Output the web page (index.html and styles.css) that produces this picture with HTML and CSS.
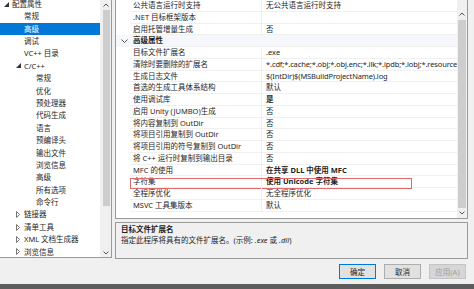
FILE: index.html
```html
<!DOCTYPE html>
<html lang="zh-CN">
<head>
    <meta charset="UTF-8">
    <title>属性页</title>
    <link rel="stylesheet" href="styles.css">
</head>
<body>
    <div class="main">
        <!-- left: settings tree -->
        <div class="tree-box">
            <ul class="tree">
                <li class="lv0"><span class="twisty"><svg width="5" height="5"><polygon points="5,0 5,5 0,5" fill="#333"/></svg></span>配置属性</li>
                <li class="lv1"><span class="twisty"></span>常规</li>
                <li class="lv1 sel"><span class="twisty"></span>高级</li>
                <li class="lv1"><span class="twisty"></span>调试</li>
                <li class="lv1"><span class="twisty"></span>VC++ 目录</li>
                <li class="lv1"><span class="twisty"><svg width="5" height="5"><polygon points="5,0 5,5 0,5" fill="#333"/></svg></span>C/C++</li>
                <li class="lv2"><span class="twisty"></span>常规</li>
                <li class="lv2"><span class="twisty"></span>优化</li>
                <li class="lv2"><span class="twisty"></span>预处理器</li>
                <li class="lv2"><span class="twisty"></span>代码生成</li>
                <li class="lv2"><span class="twisty"></span>语言</li>
                <li class="lv2"><span class="twisty"></span>预编译头</li>
                <li class="lv2"><span class="twisty"></span>输出文件</li>
                <li class="lv2"><span class="twisty"></span>浏览信息</li>
                <li class="lv2"><span class="twisty"></span>高级</li>
                <li class="lv2"><span class="twisty"></span>所有选项</li>
                <li class="lv2"><span class="twisty"></span>命令行</li>
                <li class="lv1"><span class="twisty"><svg width="4" height="7"><polygon points="0.5,0.5 3.5,3.5 0.5,6.5" fill="none" stroke="#777"/></svg></span>链接器</li>
                <li class="lv1"><span class="twisty"><svg width="4" height="7"><polygon points="0.5,0.5 3.5,3.5 0.5,6.5" fill="none" stroke="#777"/></svg></span>清单工具</li>
                <li class="lv1"><span class="twisty"><svg width="4" height="7"><polygon points="0.5,0.5 3.5,3.5 0.5,6.5" fill="none" stroke="#777"/></svg></span>XML 文档生成器</li>
                <li class="lv1"><span class="twisty"><svg width="4" height="7"><polygon points="0.5,0.5 3.5,3.5 0.5,6.5" fill="none" stroke="#777"/></svg></span>浏览信息</li>
            </ul>
            <div class="vscroll tree-scroll">
                <div class="arrow"><svg width="6" height="4"><polyline points="0.5,3.5 3,1 5.5,3.5" fill="none" stroke="#555"/></svg></div>
                <div class="thumb tree-thumb"></div>
                <div class="spacer"></div>
                <div class="arrow"><svg width="6" height="4"><polyline points="0.5,0.5 3,3 5.5,0.5" fill="none" stroke="#555"/></svg></div>
            </div>
        </div>

        <div class="right">
            <!-- property grid -->
            <div class="grid-box">
                <div class="rows">
                    <div class="row"><span class="gutter"></span><span class="name">公共语言运行时支持</span><span class="value">无公共语言运行时支持</span></div>
                    <div class="row"><span class="gutter"></span><span class="name">.NET 目标框架版本</span><span class="value"></span></div>
                    <div class="row"><span class="gutter"></span><span class="name">启用托管增量生成</span><span class="value">否</span></div>
                    <div class="row cat"><span class="gutter"><svg width="7" height="4"><polyline points="0.5,0.5 3.5,3.5 6.5,0.5" fill="none" stroke="#555"/></svg></span><span class="name">高级属性</span></div>
                    <div class="row"><span class="gutter"></span><span class="name">目标文件扩展名</span><span class="value">.exe</span></div>
                    <div class="row"><span class="gutter"></span><span class="name">清除时要删除的扩展名</span><span class="value tight">*.cdf;*.cache;*.obj;*.obj.enc;*.ilk;*.ipdb;*.iobj;*.resource</span></div>
                    <div class="row"><span class="gutter"></span><span class="name">生成日志文件</span><span class="value tight">$(IntDir)$(MSBuildProjectName).log</span></div>
                    <div class="row"><span class="gutter"></span><span class="name">首选的生成工具体系结构</span><span class="value">默认</span></div>
                    <div class="row"><span class="gutter"></span><span class="name">使用调试库</span><span class="value bold">是</span></div>
                    <div class="row"><span class="gutter"></span><span class="name">启用 Unity (JUMBO)生成</span><span class="value">否</span></div>
                    <div class="row"><span class="gutter"></span><span class="name">将内容复制到 OutDir</span><span class="value">否</span></div>
                    <div class="row"><span class="gutter"></span><span class="name">将项目引用复制到 OutDir</span><span class="value">否</span></div>
                    <div class="row"><span class="gutter"></span><span class="name">将项目引用的符号复制到 OutDir</span><span class="value">否</span></div>
                    <div class="row"><span class="gutter"></span><span class="name">将 C++ 运行时复制到输出目录</span><span class="value">否</span></div>
                    <div class="row"><span class="gutter"></span><span class="name">MFC 的使用</span><span class="value bold">在共享 DLL 中使用 MFC</span></div>
                    <div class="row marked"><span class="gutter"></span><span class="name">字符集</span><span class="value bold">使用 Unicode 字符集</span><span class="mark"></span></div>
                    <div class="row"><span class="gutter"></span><span class="name">全程序优化</span><span class="value">无全程序优化</span></div>
                    <div class="row"><span class="gutter"></span><span class="name">MSVC 工具集版本</span><span class="value">默认</span></div>
                </div>
                <div class="vscroll grid-scroll">
                    <div class="arrow"><svg width="6" height="4"><polyline points="0.5,3.5 3,1 5.5,3.5" fill="none" stroke="#555"/></svg></div>
                    <div class="thumb grid-thumb"></div>
                    <div class="spacer"></div>
                    <div class="arrow"><svg width="6" height="4"><polyline points="0.5,0.5 3,3 5.5,0.5" fill="none" stroke="#555"/></svg></div>
                </div>
            </div>

            <!-- description of the selected property -->
            <div class="desc">
                <div class="desc-title">目标文件扩展名</div>
                <div>指定此程序将具有的文件扩展名。(示例: <i>.exe</i> 或 <i>.dll</i>)</div>
            </div>
        </div>
    </div>

    <div class="buttons">
        <button class="btn default">确定</button>
        <button class="btn">取消</button>
        <button class="btn" disabled>应用(A)</button>
    </div>
    <div class="taskbar"></div>
</body>
</html>
```

FILE: styles.css
```css
:root {
    --dialog-bg: #f0f0f0;
    --panel-border: #9a9a9a;
    --line: #f0f0f0;
    --text: #1e1e1e;
    --select: #0078d7;
}

body {
    margin: 0;
    width: 474px;
    height: 289px;
    overflow: hidden;
    background-color: var(--dialog-bg);
    color: var(--text);
    font-family: "Noto Sans", "Noto Sans CJK SC", sans-serif;
    font-size: 7.5px;
}

.main {
    display: grid;
    grid-template-columns: 112px 353px;
    column-gap: 3px;
    height: 259px;
}

/* Tree */
.tree-box {
    display: flex;
    height: 258px;
    box-sizing: border-box;
    background-color: #fff;
    border-right: 1px solid var(--panel-border);
    border-bottom: 1px solid var(--panel-border);
}

.tree {
    list-style: none;
    margin: -2.2px 0 0;
    padding: 0;
    width: 100px;
    overflow: hidden;
}

.tree li {
    display: flex;
    align-items: center;
    height: 12.4px;
    line-height: 12.4px;
    white-space: nowrap;
}

.tree .lv0 { padding-left: 4px; }
.tree .lv1 { padding-left: 16px; }
.tree .lv2 { padding-left: 28px; }

.tree .sel {
    background-color: var(--select);
    color: #fff;
}

.twisty {
    display: flex;
    align-items: center;
    width: 8px;
    flex-shrink: 0;
}

/* Scrollbars */
.vscroll {
    display: flex;
    flex-direction: column;
    align-items: center;
    background-color: #f0f0f0;
}

.vscroll .arrow {
    display: flex;
    align-items: center;
    justify-content: center;
    height: 9px;
    width: 100%;
}

.vscroll .spacer {
    flex: 1;
}

.thumb {
    background-color: #cdcdcd;
}

.tree-scroll {
    width: 11px;
}

.tree-thumb {
    width: 7px;
    height: 196px;
    margin: 1px 0 0 2px;
}

.grid-scroll {
    width: 10px;
    padding-top: 9px;
    box-sizing: border-box;
}

.grid-scroll .arrow {
    height: 10px;
}

.grid-thumb {
    width: 8px;
    height: 188px;
    margin-top: 1px;
}

/* Property grid */
.right {
    display: flex;
    flex-direction: column;
    gap: 3px;
}

.grid-box {
    display: flex;
    height: 219px;
    box-sizing: border-box;
    background-color: #fff;
    border: 1px solid var(--panel-border);
    border-top: none;
}

.rows {
    flex: 1;
    overflow: hidden;
}

.row {
    position: relative;
    display: grid;
    grid-template-columns: 14px 132px 1fr;
    height: 11.75px;
    line-height: 11.75px;
}

.row .name,
.row .value {
    box-sizing: border-box;
    height: 11.75px;
    border-bottom: 1px solid var(--line);
    white-space: nowrap;
    overflow: hidden;
}

.row .name {
    padding-left: 3px;
    border-right: 1px solid var(--line);
}

.row .value {
    padding-left: 4px;
}

.row .value.tight {
    letter-spacing: -0.12px;
}

.gutter {
    display: flex;
    align-items: center;
    padding-left: 5px;
}

.row.cat {
    background-color: #f5f7fb;
}

.row.cat .name {
    grid-column: 2 / 4;
    border-right: none;
    font-weight: 700;
}

.bold {
    font-weight: 700;
}

/* red annotation box round the charset row */
.mark {
    position: absolute;
    left: 14px;
    top: 1.5px;
    width: 282px;
    height: 11px;
    box-sizing: border-box;
    border: 1px solid #e06a6a;
}

/* Description */
.desc {
    height: 37px;
    box-sizing: border-box;
    border: 1px solid var(--panel-border);
    padding: 0.5px 0 0 5px;
    line-height: 11.75px;
    white-space: nowrap;
}

.desc-title {
    font-weight: 700;
}

/* Footer */
.buttons {
    display: flex;
    justify-content: flex-end;
    gap: 8px;
    padding: 5px 8px 5px 0;
}

.btn {
    width: 37px;
    height: 15px;
    padding: 0;
    font-family: inherit;
    font-size: 7.5px;
    color: var(--text);
    background-color: #e1e1e1;
    border: 1px solid #adadad;
}

.btn.default {
    border-color: var(--select);
}

.btn:disabled {
    color: #a0a0a0;
    background-color: #d6d6d6;
    border-color: #c4c4c4;
}

.taskbar {
    height: 5px;
    background-color: #5c5c5c;
}
```
